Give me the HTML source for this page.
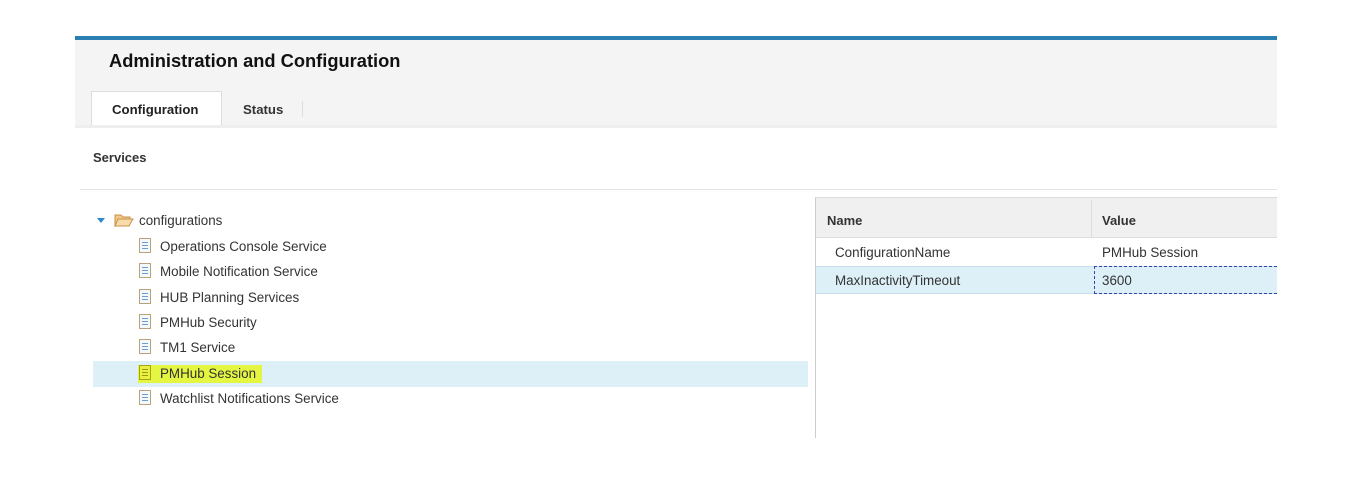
<!DOCTYPE html>
<html><head><style>
body{margin:0;width:1348px;height:478px;background:#fff;font-family:"Liberation Sans",sans-serif;position:relative;overflow:hidden}
.a{position:absolute}
.t{font-size:13.4px;color:#333;white-space:nowrap}
.doc{position:absolute;width:12px;height:15px;border:1px solid #b8a27a;background:#f4f8fc;box-sizing:border-box}
.doc i{position:absolute;left:2px;right:2px;height:1px;background:#6a9ccc}
</style></head><body>
<div class="a" style="left:75px;top:36px;width:1202px;height:4px;background:#2a7fb0"></div>
<div class="a" style="left:75px;top:40px;width:1202px;height:85px;background:#f4f4f4"></div>
<div class="a" style="left:109px;top:50px;font-size:18.3px;font-weight:bold;color:#111">Administration and Configuration</div>
<div class="a" style="left:91px;top:91px;width:131px;height:36px;background:#fff;border:1px solid #ddd;border-bottom:none;box-sizing:border-box"></div>
<div class="a" style="left:112px;top:102px;font-size:13.2px;font-weight:bold;color:#222">Configuration</div>
<div class="a" style="left:243px;top:102px;font-size:13.2px;font-weight:bold;color:#333">Status</div>
<div class="a" style="left:302px;top:101px;width:1px;height:16px;background:#ddd"></div>
<div class="a" style="left:75px;top:125px;width:1202px;height:3px;background:#eee"></div>
<div class="a" style="left:93px;top:150px;font-size:13px;font-weight:bold;color:#333">Services</div>
<div class="a" style="left:80px;top:189px;width:1197px;height:1px;background:#e4e4e4"></div>

<div class="a" style="left:97px;top:218px;width:0;height:0;border-left:4px solid transparent;border-right:4px solid transparent;border-top:5px solid #2a8ad0"></div>
<svg class="a" style="left:114px;top:213px" width="20" height="14"><path d="M1 2h6l2 2h7v2H5L1 13z" fill="#f3c98a" stroke="#c8904a"/><path d="M4 6h15l-4 7H1z" fill="#f7dcaa" stroke="#c8904a"/></svg>
<div class="a t" style="left:139px;top:213px">configurations</div>

<div class="a" style="left:93px;top:361px;width:715px;height:26px;background:#ddf0f8"></div>
<div class="a" style="left:138px;top:365px;width:124px;height:18px;background:#e4f542"></div>

<div class="doc" style="left:139px;top:238px"><i style="top:3px"></i><i style="top:6px"></i><i style="top:9px"></i></div>
<div class="a t" style="left:160px;top:239px">Operations Console Service</div>
<div class="doc" style="left:139px;top:263px"><i style="top:3px"></i><i style="top:6px"></i><i style="top:9px"></i></div>
<div class="a t" style="left:160px;top:264px">Mobile Notification Service</div>
<div class="doc" style="left:139px;top:289px"><i style="top:3px"></i><i style="top:6px"></i><i style="top:9px"></i></div>
<div class="a t" style="left:160px;top:290px">HUB Planning Services</div>
<div class="doc" style="left:139px;top:314px"><i style="top:3px"></i><i style="top:6px"></i><i style="top:9px"></i></div>
<div class="a t" style="left:160px;top:315px">PMHub Security</div>
<div class="doc" style="left:139px;top:339px"><i style="top:3px"></i><i style="top:6px"></i><i style="top:9px"></i></div>
<div class="a t" style="left:160px;top:340px">TM1 Service</div>
<div class="doc" style="left:139px;top:365px;background:#e8f040;border-color:#a8a020"><i style="top:3px;background:#9a9a10"></i><i style="top:6px;background:#9a9a10"></i><i style="top:9px;background:#9a9a10"></i></div>
<div class="a t" style="left:160px;top:366px">PMHub Session</div>
<div class="doc" style="left:139px;top:390px"><i style="top:3px"></i><i style="top:6px"></i><i style="top:9px"></i></div>
<div class="a t" style="left:160px;top:391px">Watchlist Notifications Service</div>

<div class="a" style="left:815px;top:197px;width:462px;height:241px;border-left:1px solid #ccc;border-top:1px solid #ddd;box-sizing:border-box"></div>
<div class="a" style="left:816px;top:198px;width:461px;height:40px;background:#f0f0f0;border-bottom:1px solid #ddd;box-sizing:border-box"></div>
<div class="a" style="left:1091px;top:200px;width:1px;height:37px;background:#ddd"></div>
<div class="a" style="left:827px;top:213px;font-size:13px;font-weight:bold;color:#333">Name</div>
<div class="a" style="left:1102px;top:213px;font-size:13px;font-weight:bold;color:#333">Value</div>
<div class="a t" style="left:835px;top:245px">ConfigurationName</div>
<div class="a t" style="left:1102px;top:245px">PMHub Session</div>
<div class="a" style="left:816px;top:266px;width:461px;height:28px;background:#ddf0f8;border-top:1px solid #cde;border-bottom:1px solid #cde;box-sizing:border-box"></div>
<div class="a" style="left:1094px;top:266px;width:183px;height:28px;border:1px dashed #3344aa;border-right:none;box-sizing:border-box"></div>
<div class="a t" style="left:835px;top:273px">MaxInactivityTimeout</div>
<div class="a t" style="left:1102px;top:273px">3600</div>
</body></html>
